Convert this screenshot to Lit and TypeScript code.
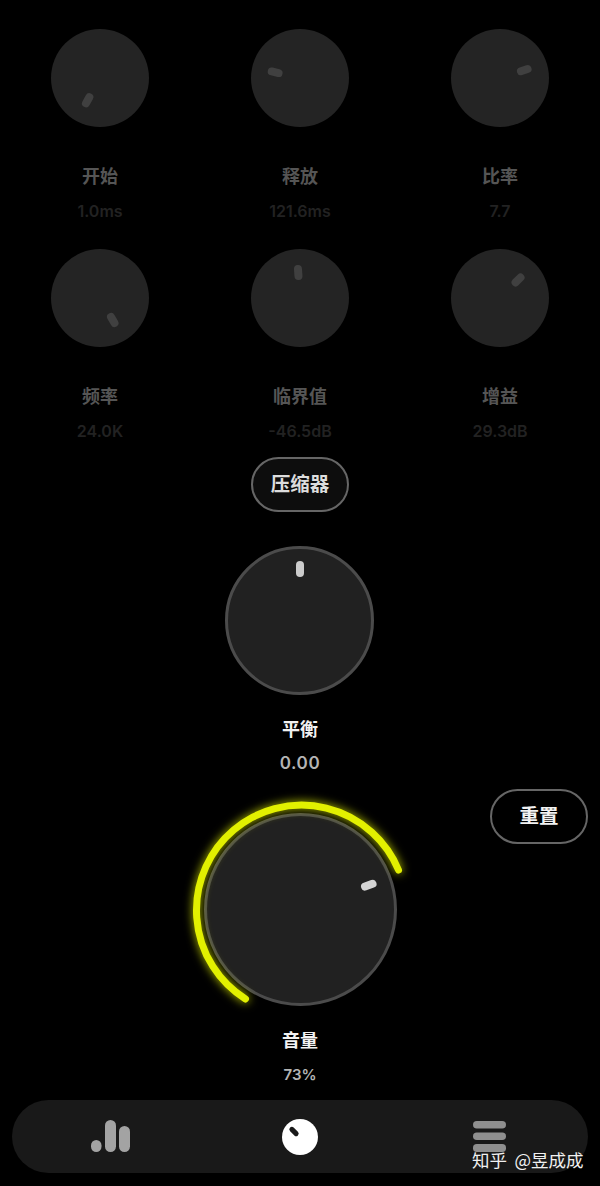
import { LitElement, css, html } from 'lit'
import { customElement, property } from 'lit/decorators.js'

// one round dial with a little pill on it, angle is clockwise from 12 o'clock
@customElement('knob-dial')
export class KnobDial extends LitElement {
  @property({ type: Number }) angle = 0

  static styles = css`
    :host {
      display: block;
      position: relative;
      box-sizing: border-box;
      width: var(--knob-size, 98px);
      height: var(--knob-size, 98px);
      border-radius: 50%;
      background: var(--knob-fill, #242424);
      border: var(--knob-border, 0 solid transparent);
    }
    .hand {
      position: absolute;
      inset: 0;
      display: flex;
      justify-content: center;
      padding-top: var(--hand-top, 16px);
      box-sizing: border-box;
    }
    .pill {
      width: var(--pill-w, 8px);
      height: var(--pill-h, 15px);
      border-radius: 4px;
      background: var(--pill-color, #404040);
    }
  `

  render() {
    return html`<div class="hand" style="transform: rotate(${this.angle}deg)"><div class="pill"></div></div>`
  }
}

const SMALL_KNOBS = [
  { label: '开始', value: '1.0ms', angle: -151 },
  { label: '释放', value: '121.6ms', angle: -77 },
  { label: '比率', value: '7.7', angle: 72 },
  { label: '频率', value: '24.0K', angle: 150 },
  { label: '临界值', value: '-46.5dB', angle: -4 },
  { label: '增益', value: '29.3dB', angle: 45 },
]

@customElement('app-root')
export class AppRoot extends LitElement {
  static styles = css`
    :host {
      display: block;
      position: relative;
      width: 600px;
      height: 1186px;
      overflow: hidden;
      background: #000;
      font-family: 'Noto Sans CJK SC', 'Noto Sans', sans-serif;
    }
    .page {
      display: flex;
      flex-direction: column;
      align-items: center;
      padding-top: 29px;
    }
    .grid {
      display: grid;
      grid-template-columns: repeat(3, 200px);
      row-gap: 28px;
    }
    .cell,
    .column {
      display: flex;
      flex-direction: column;
      align-items: center;
    }
    .label {
      margin-top: 36px;
      font-size: 18px;
      line-height: 24px;
      font-weight: 700;
      color: #555;
    }
    .value {
      margin-top: 14px;
      font-family: Inter, 'Noto Sans', sans-serif;
      font-size: 16px;
      line-height: 20px;
      font-weight: 600;
      color: #222;
    }
    .pill-btn {
      box-sizing: border-box;
      display: flex;
      align-items: center;
      justify-content: center;
      padding-bottom: 5px;
      border-radius: 28px;
      border: 2px solid #666;
      font-size: 19.5px;
      font-weight: 700;
      color: #ddd;
    }
    .compressor {
      margin-top: 16px;
      width: 98px;
      height: 55px;
      background: #0d0d0d;
    }
    .balance {
      margin-top: 34px;
      margin-right: 1px;
      --knob-size: 149px;
      --knob-fill: #212121;
      --knob-border: 3px solid #4b4b4b;
      --hand-top: 12px;
      --pill-w: 8px;
      --pill-h: 16px;
      --pill-color: #ccc;
    }
    .bright .label {
      margin-top: 21px;
      color: #f2f2f2;
    }
    .bright .value {
      margin-top: 13px;
      color: #b4b4b4;
    }
    .bright .value.wide {
      font-size: 17px;
      letter-spacing: 0.6px;
    }
    .volume-row {
      width: 100%;
      margin-top: 16px;
      display: grid;
      grid-template-columns: 1fr auto 1fr;
    }
    .reset {
      justify-self: end;
      margin-right: 12px;
      width: 98px;
      height: 55px;
      color: #f2f2f2;
    }
    .stage {
      position: relative;
      padding-top: 24px;
      --knob-size: 193px;
      --knob-fill: #212121;
      --knob-border: 3px solid #4b4b4b;
      --hand-top: 13px;
      --pill-w: 8px;
      --pill-h: 16px;
      --pill-color: #d4d4d4;
    }
    .arc {
      position: absolute;
      left: -13px;
      top: 13px;
      width: 220px;
      height: 215px;
      overflow: visible;
      filter: drop-shadow(0 0 5px rgba(226, 240, 0, 0.85));
    }
    .bright .value.percent {
      margin-top: 14px;
      font-size: 15px;
    }
    .nav {
      align-self: stretch;
      margin: 15px 12px 0;
      height: 73px;
      border-radius: 37px;
      background: #191919;
      display: grid;
      grid-template-columns: 1fr auto 1fr;
      align-items: center;
    }
    .nav svg {
      display: block;
    }
    .nav-left {
      margin-left: 79px;
      margin-bottom: 1px;
    }
    .nav-right {
      justify-self: end;
      margin-right: 82px;
    }
    .watermark {
      position: absolute;
      right: 16.5px;
      top: 1147px;
      font-size: 17.5px;
      line-height: 26px;
      word-spacing: 3.5px;
      color: #f0f0f0;
      white-space: pre;
    }
  `

  render() {
    return html`
      <div class="page">
        <div class="grid">
          ${SMALL_KNOBS.map(
            (k) => html`
              <div class="cell">
                <knob-dial .angle=${k.angle}></knob-dial>
                <div class="label">${k.label}</div>
                <div class="value">${k.value}</div>
              </div>
            `
          )}
        </div>

        <div class="pill-btn compressor">压缩器</div>

        <div class="column bright">
          <knob-dial class="balance" .angle=${0}></knob-dial>
          <div class="label">平衡</div>
          <div class="value wide">0.00</div>
        </div>

        <div class="volume-row">
          <div></div>
          <div class="column bright stage">
            <knob-dial .angle=${70}></knob-dial>
            <svg class="arc" viewBox="0 0 220 215">
              <path
                d="M 54.5 197 A 105 105 0 1 1 207.5 68"
                fill="none"
                stroke="#e2f000"
                stroke-width="7"
                stroke-linecap="round"
              />
            </svg>
            <div class="label">音量</div>
            <div class="value percent">73%</div>
          </div>
          <div class="pill-btn reset">重置</div>
        </div>

        <div class="nav">
          <svg class="nav-left" width="40" height="32" viewBox="0 0 40 32" fill="#a3a3a3">
            <rect x="0" y="20" width="10.5" height="12" rx="5.25" />
            <rect x="14" y="0" width="11" height="32" rx="5.5" />
            <rect x="28" y="6" width="11" height="26" rx="5.5" />
          </svg>
          <svg width="36" height="36" viewBox="0 0 36 36">
            <circle cx="18" cy="18" r="18" fill="#fff" />
            <rect x="9.5" y="7" width="5" height="11" rx="2.5" fill="#191919" transform="rotate(-45 12 12.5)" />
          </svg>
          <svg class="nav-right" width="33" height="31" viewBox="0 0 33 31" fill="#8f8f8f">
            <rect x="0" y="0" width="33" height="7.5" rx="3.75" />
            <rect x="0" y="11.5" width="33" height="7.5" rx="3.75" />
            <rect x="0" y="23" width="33" height="8" rx="3.75" />
          </svg>
        </div>
      </div>
      <div class="watermark">知乎 @昱成成</div>
    `
  }
}
